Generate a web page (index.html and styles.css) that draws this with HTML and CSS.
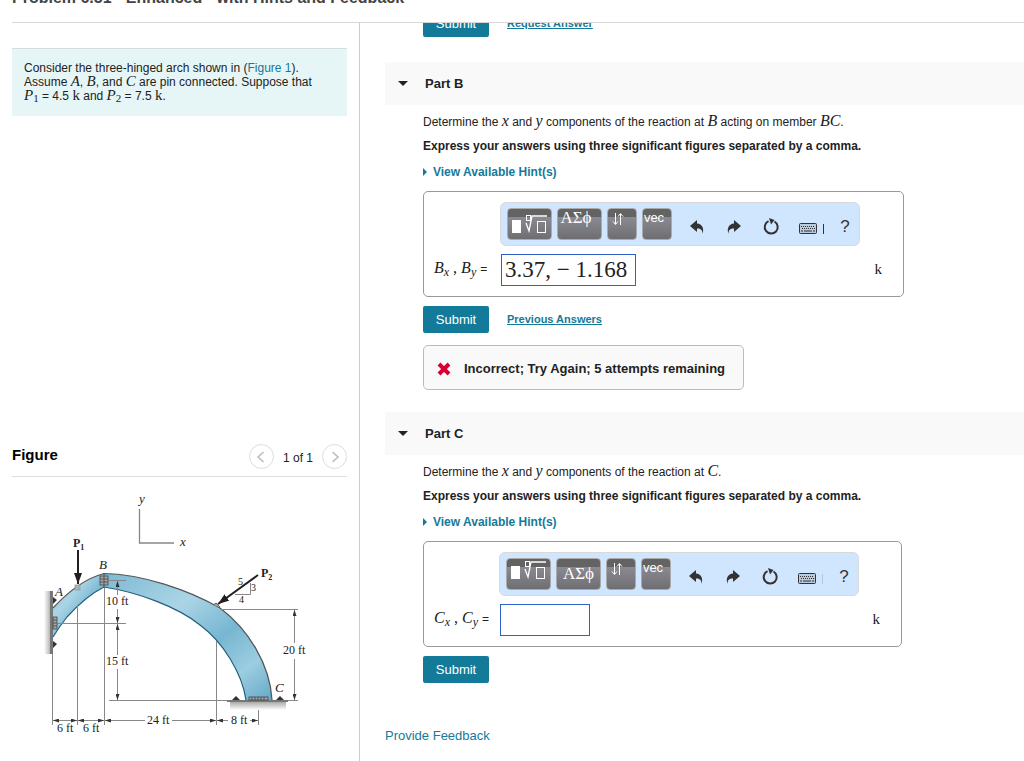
FILE: index.html
```html
<!DOCTYPE html>
<html lang="en">
<head>
    <meta charset="UTF-8">
    <meta name="viewport" content="width=device-width, initial-scale=1.0">
    <title>Problem 6.51 - Enhanced - with Hints and Feedback</title>
    <link rel="stylesheet" href="styles.css">
</head>
<body>

    <!-- Shared icons -->
    <svg class="sprite" aria-hidden="true">
        <symbol id="undo" viewBox="0 0 20 20">
            <path d="M3 9 L10 3 V6.500 C15 7 17.500 11 15.500 17 C15.500 13 14 11.500 10 11.500 V15 Z" fill="#333"/>
        </symbol>
        <symbol id="redo" viewBox="0 0 20 20">
            <path d="M17 9 L10 3 V6.500 C5 7 2.500 11 4.500 17 C4.500 13 6 11.500 10 11.500 V15 Z" fill="#333"/>
        </symbol>
        <symbol id="reset" viewBox="0 0 20 20">
            <path d="M13.500 4.500 A6.500 6.500 0 1 1 7.500 4.200" fill="none" stroke="#333" stroke-width="2"/>
            <path d="M8 1 L13.500 3 L10 7.500 Z" fill="#333"/>
        </symbol>
        <symbol id="keyboard" viewBox="0 0 20 20">
            <rect x="1.500" y="6.500" width="17" height="10" rx="1" fill="#b9cbdd" stroke="#333"/>
            <path d="M3 9.500 H17 M4 11.500 H17" stroke="#333" stroke-dasharray="1 1"/>
            <path d="M3 14 H5 M6 14 H14 M15 14 H17" stroke="#333"/>
        </symbol>
        <symbol id="root" viewBox="0 0 36 20">
            <rect x="0" y="6" width="9" height="13" fill="#fff"/>
            <path d="M14 9 L17 17 L20 2 H35" fill="none" stroke="#fff" stroke-width="1.300"/>
            <rect x="14.500" y="1.500" width="4" height="5" fill="none" stroke="#fff"/>
            <rect x="25.500" y="7.500" width="8" height="11" fill="none" stroke="#fff"/>
        </symbol>
        <symbol id="arrows" viewBox="0 0 12 14">
            <path d="M3.500 1 V12 M1 9.500 L3.500 12.500 L6 9.500 M8.500 13 V2 M6 4.500 L8.500 1.500 L11 4.500" fill="none" stroke="#fff"/>
        </symbol>
    </svg>

    <header class="title-bar">
        <h1>Problem 6.51 - Enhanced - with Hints and Feedback</h1>
    </header>

    <div class="layout">
        <aside class="left-panel">
            <div class="problem">
                Consider the three-hinged arch shown in (<a href="#figure">Figure 1</a>).
                Assume <i class="math">A</i>, <i class="math">B</i>, and <i class="math">C</i> are pin connected. Suppose that
                <i class="math">P</i><sub>1</sub> = 4.5 <span class="math">k</span> and <i class="math">P</i><sub>2</sub> = 7.5 <span class="math">k</span>.
            </div>

            <section class="figure" id="figure">
                <div class="figure-head">
                    <h2>Figure</h2>
                    <div class="pager">
                        <button class="round" aria-label="Previous figure">
                            <svg width="10" height="12" viewBox="0 0 10 12"><path d="M7.500 1 L2 6 L7.500 11" fill="none" stroke="#bbb" stroke-width="1.500"/></svg>
                        </button>
                        <span>1 of 1</span>
                        <button class="round" aria-label="Next figure">
                            <svg width="10" height="12" viewBox="0 0 10 12"><path d="M2.500 1 L8 6 L2.500 11" fill="none" stroke="#bbb" stroke-width="1.500"/></svg>
                        </button>
                    </div>
                </div>

                <svg class="arch" viewBox="12 485 335 260" role="img" aria-label="Three-hinged arch">
                    <defs>
                        <linearGradient id="steel" x1="0" y1="0" x2="1" y2="1">
                            <stop offset="0" stop-color="#7db9d3"/>
                            <stop offset="0.350" stop-color="#abd5e6"/>
                            <stop offset="0.600" stop-color="#77b6d1"/>
                            <stop offset="0.800" stop-color="#9ccde1"/>
                            <stop offset="1" stop-color="#64a9c8"/>
                        </linearGradient>
                        <linearGradient id="wall">
                            <stop offset="0" stop-color="#fff"/>
                            <stop offset="1" stop-color="#aaa"/>
                        </linearGradient>
                        <linearGradient id="ground" x1="0" y1="0" x2="0" y2="1">
                            <stop offset="0" stop-color="#aaa"/>
                            <stop offset="1" stop-color="#fff"/>
                        </linearGradient>
                        <marker id="tip" viewBox="0 0 6 4" refX="6" refY="2" markerWidth="6" markerHeight="4" markerUnits="userSpaceOnUse" orient="auto-start-reverse">
                            <path d="M0 0 L6 2 L0 4 Z" fill="#333"/>
                        </marker>
                        <marker id="load" viewBox="0 0 11 8" refX="11" refY="4" markerWidth="11" markerHeight="8" markerUnits="userSpaceOnUse" orient="auto">
                            <path d="M0 0 L11 4 L0 8 Z" fill="#231f20"/>
                        </marker>
                    </defs>

                    <!-- supports -->
                    <rect x="44" y="591" width="7" height="63" fill="url(#wall)"/>
                    <rect x="50" y="591" width="3" height="63" fill="#777"/>
                    <rect x="230" y="702" width="56" height="8" fill="url(#ground)"/>
                    <rect x="227" y="700" width="61" height="2" fill="#777"/>

                    <!-- arch members -->
                    <path d="M53 608 Q79 580 104 573.500 V587 Q86 596 67 617 Q59 627 53 637 Z" fill="url(#steel)"/>
                    <path d="M104 573.500 C142 574 188 590 220 608 C248 629 270 664 272 700 H246 C242 673 223 642 200 625 C178 607 137 592 104 587 Z" fill="url(#steel)"/>
                    <path d="M53 608 Q79 580 104 573.500 C142 574 188 590 220 608 C248 629 270 664 272 700" fill="none" stroke="#555" stroke-width="1.200"/>
                    <path d="M53 637 Q59 627 67 617 Q86 596 104 587 C137 592 178 607 200 625 C223 642 242 673 246 700" fill="none" stroke="#245f7c" stroke-width="1.200"/>

                    <!-- pins and bolts -->
                    <g fill="#a2a5a7" stroke="#444" stroke-width="0.800">
                        <rect x="100" y="576" width="8" height="9"/>
                        <path d="M100 579 H108 M100 582 H108 M104 573 V588"/>
                        <rect x="53" y="617" width="4" height="12"/>
                        <path d="M53 620 H57 M53 623 H57 M53 626 H57"/>
                        <rect x="249" y="697" width="19" height="3"/>
                        <path d="M252 697 V700 M255 697 V700 M258 697 V700 M261 697 V700 M264 697 V700"/>
                        <rect x="75" y="585" width="5" height="5" fill="#9fb5bf" stroke="#999"/>
                        <path d="M213 605 L216 603 L220 607"/>
                    </g>
                    <g fill="#333">
                        <path d="M53 597 L57 600 L53 604 Z M53 641 L57 644 L53 648 Z"/>
                        <path d="M232 700 L236 696 L240 700 Z M276 700 L280 696 L284 700 Z"/>
                    </g>

                    <!-- axes and extension lines -->
                    <g fill="none" stroke="#888">
                        <path d="M139.500 509 V543 H174" stroke-width="1.300"/>
                        <path d="M52.500 654 V725 M77.500 606 V725 M104.500 588 V725 M216.500 641 V725 M258.500 710 V725"/>
                        <path d="M108 580.500 H126 M57 623.500 H126 M109 700.500 H228 M220 609.500 H298 M288 700.500 H298"/>
                        <path d="M235 594.500 H250.500 V583"/>
                    </g>

                    <!-- dimensions -->
                    <g stroke="#888">
                        <path d="M117.500 595 V581" marker-end="url(#tip)"/>
                        <path d="M117.500 609 V623" marker-end="url(#tip)"/>
                        <path d="M117.500 655 V624" marker-end="url(#tip)"/>
                        <path d="M117.500 669 V700" marker-end="url(#tip)"/>
                        <path d="M294.500 643 V610" marker-end="url(#tip)"/>
                        <path d="M294.500 659 V700" marker-end="url(#tip)"/>
                        <path d="M53 720.500 H77" marker-start="url(#tip)" marker-end="url(#tip)"/>
                        <path d="M78 720.500 H104" marker-start="url(#tip)" marker-end="url(#tip)"/>
                        <path d="M145 720.500 H105" marker-end="url(#tip)"/>
                        <path d="M172 720.500 H216" marker-end="url(#tip)"/>
                        <path d="M228 720.500 H217" marker-end="url(#tip)"/>
                        <path d="M250 720.500 H258" marker-end="url(#tip)"/>
                    </g>

                    <!-- loads -->
                    <path d="M78 550 V584" stroke="#231f20" stroke-width="2" marker-end="url(#load)"/>
                    <path d="M258 575 L218 604" stroke="#231f20" stroke-width="2" marker-end="url(#load)"/>

                    <g class="dim">
                        <text x="106" y="605">10 ft</text>
                        <text x="106" y="665">15 ft</text>
                        <text x="283" y="654">20 ft</text>
                        <text x="57" y="732">6 ft</text>
                        <text x="83" y="732">6 ft</text>
                        <text x="147" y="724">24 ft</text>
                        <text x="231" y="724">8 ft</text>
                    </g>
                    <g class="tri">
                        <text x="238" y="585">5</text>
                        <text x="251" y="591">3</text>
                        <text x="239" y="603">4</text>
                    </g>
                    <g class="point">
                        <text x="139" y="503">y</text>
                        <text x="180" y="546">x</text>
                        <text x="55" y="596">A</text>
                        <text x="99" y="569">B</text>
                        <text x="275" y="692">C</text>
                    </g>
                    <g class="force">
                        <text x="73" y="547">P<tspan class="idx" dy="3">1</tspan></text>
                        <text x="261" y="577">P<tspan class="idx" dy="3">2</tspan></text>
                    </g>
                </svg>
            </section>
        </aside>

        <main class="right-panel">
            <div class="actions scrolled">
                <button class="submit">Submit</button>
                <a class="small-link" href="#">Request Answer</a>
            </div>

            <section class="part">
                <h2 class="part-head"><button>Part B</button></h2>
                <div class="part-body">
                    <p>Determine the <i class="math">x</i> and <i class="math">y</i> components of the reaction at <i class="math">B</i> acting on member <i class="math">BC</i>.</p>
                    <p><strong>Express your answers using three significant figures separated by a comma.</strong></p>
                    <a class="hints" href="#">View Available Hint(s)</a>

                    <div class="answer-box">
                        <div class="toolbar">
                            <button class="tool wide" aria-label="Templates"><svg width="36" height="20"><use href="#root"/></svg></button>
                            <button class="tool wide greek top">ΑΣϕ</button>
                            <button class="tool sort" aria-label="Subscript and superscript"><svg width="12" height="14"><use href="#arrows"/></svg></button>
                            <button class="tool vec">vec</button>
                            <div class="icons">
                                <button aria-label="Undo"><svg width="20" height="20"><use href="#undo"/></svg></button>
                                <button aria-label="Redo"><svg width="20" height="20"><use href="#redo"/></svg></button>
                                <button aria-label="Reset"><svg width="20" height="20"><use href="#reset"/></svg></button>
                                <button class="keys dark" aria-label="Keyboard shortcuts"><svg width="20" height="20"><use href="#keyboard"/></svg></button>
                                <button aria-label="Help">?</button>
                            </div>
                        </div>
                        <label for="partB"><i>B<sub>x</sub></i> , <i>B<sub>y</sub></i> <span>=</span></label>
                        <input id="partB" type="text" value="3.37, − 1.168">
                        <span class="unit">k</span>
                    </div>

                    <div class="actions">
                        <button class="submit">Submit</button>
                        <a class="small-link" href="#">Previous Answers</a>
                    </div>

                    <div class="feedback">
                        <svg width="14" height="14" viewBox="0 0 14 14"><path d="M2 2 L12 12 M12 2 L2 12" stroke="#dc0032" stroke-width="4"/></svg>
                        <strong>Incorrect; Try Again; 5 attempts remaining</strong>
                    </div>
                </div>
            </section>

            <section class="part">
                <h2 class="part-head"><button>Part C</button></h2>
                <div class="part-body">
                    <p>Determine the <i class="math">x</i> and <i class="math">y</i> components of the reaction at <i class="math">C</i>.</p>
                    <p><strong>Express your answers using three significant figures separated by a comma.</strong></p>
                    <a class="hints" href="#">View Available Hint(s)</a>

                    <div class="answer-box narrow">
                        <div class="toolbar">
                            <button class="tool wide high" aria-label="Templates"><svg width="36" height="20"><use href="#root"/></svg></button>
                            <button class="tool wide greek">ΑΣϕ</button>
                            <button class="tool sort" aria-label="Subscript and superscript"><svg width="12" height="14"><use href="#arrows"/></svg></button>
                            <button class="tool vec">vec</button>
                            <div class="icons">
                                <button aria-label="Undo"><svg width="20" height="20"><use href="#undo"/></svg></button>
                                <button aria-label="Redo"><svg width="20" height="20"><use href="#redo"/></svg></button>
                                <button aria-label="Reset"><svg width="20" height="20"><use href="#reset"/></svg></button>
                                <button class="keys" aria-label="Keyboard shortcuts"><svg width="20" height="20"><use href="#keyboard"/></svg></button>
                                <button aria-label="Help">?</button>
                            </div>
                        </div>
                        <label for="partC"><i>C<sub>x</sub></i> , <i>C<sub>y</sub></i> <span>=</span></label>
                        <input id="partC" type="text">
                        <span class="unit">k</span>
                    </div>

                    <div class="actions">
                        <button class="submit">Submit</button>
                    </div>
                </div>
            </section>

            <a class="provide" href="#">Provide Feedback</a>
        </main>
    </div>

</body>
</html>
```
FILE: styles.css
```css
* {
    box-sizing: border-box;
}

body {
    margin: 0;
    height: 100vh;
    display: flex;
    flex-direction: column;
    overflow: hidden;
    font-family: "Liberation Sans", Arial, sans-serif;
    font-size: 13px;
    line-height: 18px;
    color: #222;
    background-color: #fff;
}

h1, h2, p {
    margin: 0;
}

a {
    color: #147a99;
    text-decoration: none;
}

button {
    font-family: inherit;
    border: none;
    padding: 0;
    cursor: pointer;
}

svg {
    display: block;
}

.sprite {
    position: absolute;
    width: 0;
    height: 0;
}

.math {
    font-family: "Liberation Serif", serif;
    font-size: 16px;
    line-height: 0;
}

/* Title, scrolled mostly out of view */
.title-bar {
    flex: none;
    height: 23px;
    margin-left: 12px;
    border-bottom: 1px solid #d8d8d8;
    overflow: hidden;
}

.title-bar h1 {
    margin-top: -12px;
    font-size: 16px;
    line-height: 20px;
    color: #444;
}

.layout {
    flex: 1;
    min-height: 0;
    display: flex;
}

/* Left panel */
.left-panel {
    flex: none;
    width: 360px;
    padding: 25px 12px 16px;
    border-right: 1px solid #c5ccd3;
    display: flex;
    flex-direction: column;
    justify-content: space-between;
}

.problem {
    padding: 12px 24px 13px 12px;
    border-top: 1px solid #d5dcdc;
    background-color: #e6f6f7;
    font-size: 12px;
    line-height: 14px;
}

.problem .math {
    font-size: 15px;
}

.problem sub {
    font-family: "Liberation Serif", serif;
    font-size: 11px;
    line-height: 0;
    vertical-align: -2px;
}

.figure-head {
    display: flex;
    justify-content: space-between;
    align-items: center;
    height: 33px;
    padding-bottom: 7px;
    border-bottom: 1px solid #ddd;
}

.figure-head h2 {
    padding-bottom: 4px;
    font-size: 15px;
    color: #000;
}

.pager {
    display: flex;
    align-items: center;
    gap: 9px;
    font-size: 12px;
}

.pager span {
    padding-top: 3px;
}

.round {
    width: 25px;
    height: 25px;
    border: 1px solid #ddd;
    border-radius: 50%;
    background-color: #fff;
    display: flex;
    align-items: center;
    justify-content: center;
}

.arch {
    width: 100%;
    margin-top: 8px;
    font-family: "Liberation Serif", serif;
    fill: #222;
}

.dim {
    font-size: 12px;
}

.tri {
    font-size: 10px;
}

.point {
    font-size: 13px;
    font-style: italic;
}

.force {
    font-size: 12px;
    font-weight: bold;
}

.idx {
    font-size: 8px;
}

/* Right panel */
.right-panel {
    flex: 1;
    min-width: 0;
    padding-left: 25px;
    overflow: hidden;
}

.actions {
    display: flex;
    align-items: center;
    gap: 18px;
    margin-top: 9px;
}

.scrolled {
    margin: -13px 0 25px 38px;
}

.submit {
    width: 66px;
    height: 27px;
    border-radius: 2px;
    background-color: #147a99;
    color: #fff;
    font-size: 13px;
}

.small-link {
    padding-bottom: 2px;
    font-size: 11px;
    font-weight: bold;
    text-decoration: underline;
}

.part-head {
    background-color: #f9f9f9;
}

.part-head button {
    display: flex;
    align-items: center;
    gap: 17px;
    width: 100%;
    height: 43px;
    padding-left: 13px;
    background: none;
    font-size: 13px;
    font-weight: bold;
    color: #222;
}

.part-head button::before {
    content: "";
    border: 5px solid transparent;
    border-top-color: #222;
    border-bottom: 0;
}

.part-body {
    padding: 8px 0 22px 38px;
    font-size: 12px;
}

.part-body p {
    height: 18px;
    margin-bottom: 6px;
}

.hints {
    display: flex;
    align-items: center;
    gap: 6px;
    margin: 8px 0 10px;
    font-weight: bold;
}

.hints::before {
    content: "";
    border: 4px solid transparent;
    border-left-color: #147a99;
    border-right: 0;
}

.answer-box {
    max-width: 481px;
    padding: 10px 21px 10px 10px;
    border: 1px solid #999;
    border-radius: 5px;
    display: grid;
    grid-template-columns: 67px 1fr auto;
    row-gap: 8px;
    align-items: center;
}

.answer-box.narrow {
    max-width: 479px;
    grid-template-columns: 66px 1fr auto;
}

.toolbar {
    grid-column: 2 / 4;
    display: flex;
    gap: 5px;
    width: 360px;
    height: 44px;
    margin-left: -1px;
    padding: 5px 6px;
    border: 1px solid #d9d9d9;
    border-radius: 6px;
    background-color: #d0e5fe;
}

.tool {
    flex: none;
    display: flex;
    justify-content: center;
    align-items: center;
    width: 30px;
    height: 32px;
    border: 1px solid #aaa;
    border-radius: 4px;
    background: linear-gradient(#636363 27%, #8b8a92 27%, #6e6e72);
    color: #fff;
    overflow: hidden;
}

.wide {
    width: 45px;
}

.high {
    padding-bottom: 8px;
}

.greek {
    font-family: "Liberation Serif", serif;
    font-size: 17px;
}

.greek.top {
    padding: 0 7px 12px 0;
}

.sort {
    padding: 0 8px 10px 0;
}

.vec {
    padding: 0 6px 14px 0;
    font-size: 13px;
}

.icons {
    display: flex;
    align-items: center;
    gap: 17px;
    margin-left: 10px;
    padding-top: 6px;
}

.icons button {
    flex: none;
    width: 20px;
    background: none;
    font-size: 17px;
    color: #333;
}

.keys {
    position: relative;
}

.keys::after {
    content: "";
    position: absolute;
    left: 25px;
    top: 7px;
    width: 1px;
    height: 10px;
    background-color: #b4c6da;
}

.keys.dark::after {
    background-color: #333;
}

.answer-box label {
    padding-bottom: 3px;
    font-family: "Liberation Serif", serif;
    font-size: 16px;
    white-space: nowrap;
}

.answer-box label sub {
    font-size: 12px;
    line-height: 0;
    vertical-align: -3px;
}

.answer-box label span {
    font-family: "Liberation Sans", sans-serif;
    font-size: 12px;
}

.answer-box input {
    width: 135px;
    height: 32px;
    padding: 0 3px;
    border: 1px solid #2f62c9;
    font-family: "Liberation Serif", serif;
    font-size: 23px;
    color: #222;
}

.answer-box.narrow input {
    width: 90px;
}

.unit {
    padding-bottom: 3px;
    font-family: "Liberation Serif", serif;
    font-size: 15px;
}

.feedback {
    display: flex;
    align-items: center;
    gap: 13px;
    width: 321px;
    max-width: 100%;
    height: 45px;
    margin-top: 12px;
    padding: 2px 12px 0 13px;
    border: 1px solid #bbb;
    border-radius: 5px;
    background-color: #f9f9f9;
    font-size: 13px;
}

.provide {
    display: inline-block;
    margin-top: 22px;
    font-size: 13px;
}
```
